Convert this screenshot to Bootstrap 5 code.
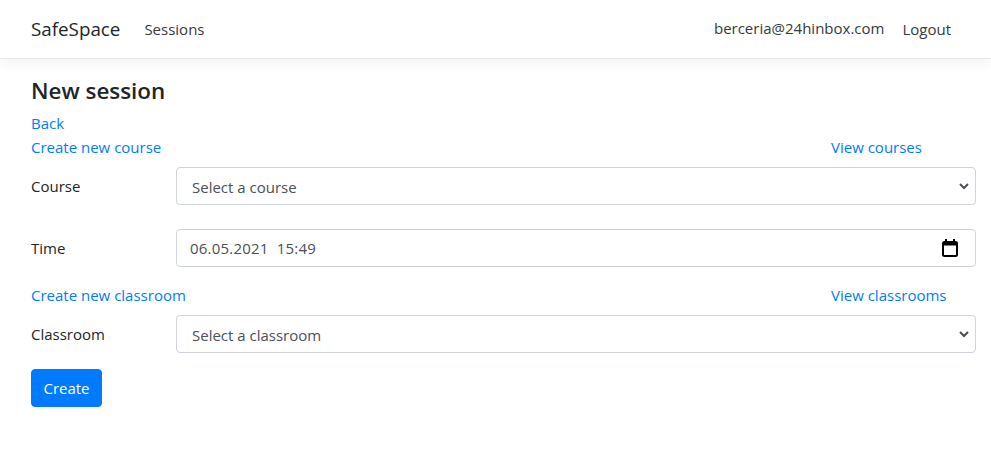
<!DOCTYPE html>
<html><head><meta charset="utf-8">
<link href="https://cdn.jsdelivr.net/npm/bootstrap@5.3.0/dist/css/bootstrap.min.css" rel="stylesheet">
<style>
body{font-family:"Open Sans","Noto Sans",sans-serif;font-size:15px;color:#212529;background:#fff;overflow:hidden}
a{color:#007bff;text-decoration:none}
.topbar{height:59px;padding:1px 40px 0 31px;box-shadow:0 4px 12px rgba(0,0,0,.05);border-bottom:1px solid #e5e5e5}
.topbar .navbar-brand{font-size:18.8px;padding:0;margin:0 24px 0 0;color:#212529}
.topbar .nav-link{color:#343a40;padding:0;font-size:15px}
.who{color:#343a40;margin-right:18px;position:relative;top:-1px}
.page{padding:0 15px 0 31px}
h1.ttl{font-size:22.4px;font-weight:600;margin:20px 0 8px;line-height:24px}
.lnk{height:24px;line-height:24px}
.lab{width:145px;flex:none;line-height:38px;margin:0}
.form-select,.form-control{height:38px;font-size:15px;color:#495057;border-color:#ced4da;border-radius:4px}
.form-select{padding-left:15px;padding-top:7px;padding-bottom:5px;background-size:10px 8px;background-position:right 6px center;background-image:url("data:image/svg+xml,%3csvg xmlns='http://www.w3.org/2000/svg' viewBox='0 0 10 8'%3e%3cpath fill='none' stroke='%23495057' stroke-width='2' d='M1 2l4 4 4-4'/%3e%3c/svg%3e")}
.form-control{padding-left:13px;letter-spacing:.2px}
.view{width:145px;flex:none}
.pick{position:relative;flex:1}
.cal{position:absolute;right:18px;top:10px;width:16px;height:18px}
.row-a{margin-top:8px}
.row-b{margin-top:24px}
.row-c{margin-top:16px}
.btn-go{background:#007bff;border-color:#007bff;color:#fff;font-size:15px;height:38px;width:71px;padding:0;border-radius:4px;margin-top:16px}
</style></head><body>
<nav class="navbar topbar d-flex justify-content-between">
<div class="d-flex align-items-center"><a class="navbar-brand" href="#">SafeSpace</a><a class="nav-link" href="#">Sessions</a></div>
<div class="d-flex align-items-center"><span class="who">berceria@24hinbox.com</span><a class="nav-link" href="#">Logout</a></div>
</nav>
<main class="page">
<h1 class="ttl">New session</h1>
<div class="lnk"><a href="#">Back</a></div>
<div class="lnk d-flex justify-content-between"><a href="#">Create new course</a><a class="view" href="#">View courses</a></div>
<div class="d-flex row-a"><label class="lab">Course</label><select class="form-select"><option>Select a course</option></select></div>
<div class="d-flex row-b"><label class="lab">Time</label><div class="pick"><input class="form-control" type="text" value="06.05.2021  15:49"><svg class="cal" viewBox="0 0 16 18" aria-hidden="true"><rect x="1" y="3" width="14" height="14" rx="1.5" fill="none" stroke="#000" stroke-width="2"/><rect x="1" y="3" width="14" height="3.5" fill="#000"/><rect x="3" y="0" width="2" height="3" fill="#000"/><rect x="11" y="0" width="2" height="3" fill="#000"/></svg></div></div>
<div class="lnk d-flex justify-content-between row-c"><a href="#">Create new classroom</a><a class="view" href="#">View classrooms</a></div>
<div class="d-flex row-a"><label class="lab">Classroom</label><select class="form-select"><option>Select a classroom</option></select></div>
<button class="btn btn-go">Create</button>
</main>
</body></html>
